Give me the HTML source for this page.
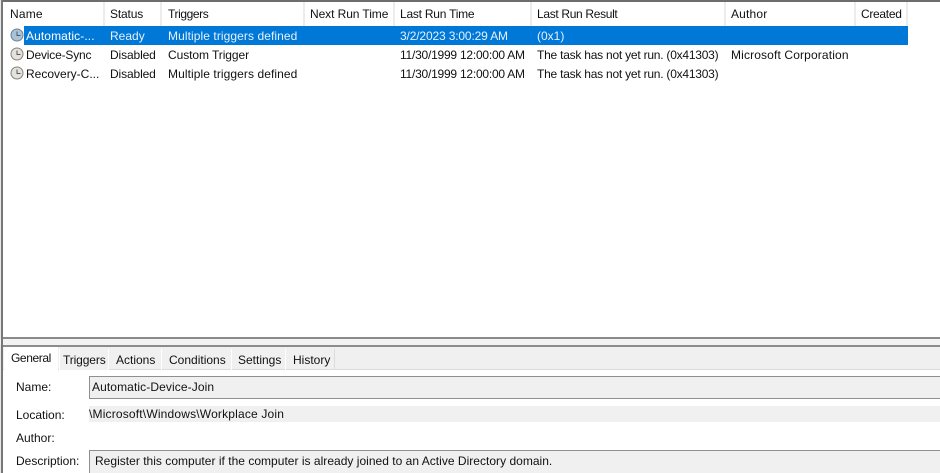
<!DOCTYPE html>
<html><head><meta charset="utf-8"><style>
html,body{margin:0;padding:0;width:940px;height:473px;overflow:hidden;background:#fff}
body{position:relative;font:12px "Liberation Sans",sans-serif;color:#111}
div{position:absolute;box-sizing:border-box}
.t{white-space:nowrap;line-height:16px;height:16px}
.s{width:2px;background:#ececec;top:2px;height:24px}
.i{width:14px;height:14px}
.a{letter-spacing:-.23px}
.m{letter-spacing:.08px}
</style></head><body>
<div style="left:0;top:0;width:940px;height:2px;background:#6d6d6d"></div>
<div style="left:0;top:0;width:1px;height:473px;background:#e8e8e8"></div>
<div style="left:1px;top:0;width:2px;height:473px;background:#777"></div>

<div class="s" style="left:103px"></div><div class="s" style="left:160px"></div><div class="s" style="left:303px"></div><div class="s" style="left:393px"></div><div class="s" style="left:530px"></div><div class="s" style="left:724px"></div><div class="s" style="left:854px"></div><div class="s" style="left:906px"></div>
<div class="t" style="left:10px;top:6px;letter-spacing:.2px">Name</div>
<div class="t" style="left:110px;top:6px;letter-spacing:-.15px">Status</div>
<div class="t" style="left:168px;top:6px;letter-spacing:-.4px">Triggers</div>
<div class="t" style="left:310px;top:6px;letter-spacing:-.08px">Next Run Time</div>
<div class="t" style="left:400px;top:6px;letter-spacing:-.23px">Last Run Time</div>
<div class="t" style="left:537px;top:6px;letter-spacing:-.33px">Last Run Result</div>
<div class="t" style="left:731px;top:6px;letter-spacing:.17px">Author</div>
<div class="t" style="left:861px;top:6px;letter-spacing:-.3px">Created</div>

<div style="left:24px;top:26px;width:884px;height:19px;background:#0078d7"></div>
<svg class="i" style="position:absolute;left:10px;top:28px" viewBox="0 0 14 14"><circle cx="7" cy="7" r="6" fill="#a9c3da" stroke="#6f7f8c"/><path d="M7 3.5V7.5H10.5" fill="none" stroke="#4f5b66"/></svg>
<svg class="i" style="position:absolute;left:10px;top:47px" viewBox="0 0 14 14"><circle cx="7" cy="7" r="6" fill="#e4e2dc" stroke="#85827a"/><path d="M7 3.5V7.5H10.5" fill="none" stroke="#5c5a55"/></svg>
<svg class="i" style="position:absolute;left:10px;top:66px" viewBox="0 0 14 14"><circle cx="7" cy="7" r="6" fill="#e4e2dc" stroke="#85827a"/><path d="M7 3.5V7.5H10.5" fill="none" stroke="#5c5a55"/></svg>

<div class="t" style="left:26px;top:28px;color:#fff;letter-spacing:.1px">Automatic-...</div>
<div class="t" style="left:110px;top:28px;color:#e6f1fb">Ready</div>
<div class="t m" style="left:168px;top:28px;color:#e6f1fb">Multiple triggers defined</div>
<div class="t" style="left:400px;top:28px;color:#e6f1fb;letter-spacing:-.15px">3/2/2023 3:00:29 AM</div>
<div class="t" style="left:537px;top:28px;color:#e6f1fb">(0x1)</div>

<div class="t" style="left:26px;top:47px;letter-spacing:-.18px">Device-Sync</div>
<div class="t" style="left:110px;top:47px;letter-spacing:-.12px">Disabled</div>
<div class="t" style="left:168px;top:47px;letter-spacing:-.07px">Custom Trigger</div>
<div class="t a" style="left:400px;top:47px">11/30/1999 12:00:00 AM</div>
<div class="t a" style="left:537px;top:47px">The task has not yet run. (0x41303)</div>
<div class="t" style="left:731px;top:47px;letter-spacing:.14px">Microsoft Corporation</div>

<div class="t" style="left:26px;top:66px">Recovery-C...</div>
<div class="t" style="left:110px;top:66px;letter-spacing:-.12px">Disabled</div>
<div class="t m" style="left:168px;top:66px">Multiple triggers defined</div>
<div class="t a" style="left:400px;top:66px">11/30/1999 12:00:00 AM</div>
<div class="t a" style="left:537px;top:66px">The task has not yet run. (0x41303)</div>

<div style="left:3px;top:337px;width:937px;height:2px;background:#8a8a8a"></div>
<div style="left:0;top:339px;width:940px;height:6px;background:#f3f3f3"></div>
<div style="left:1px;top:339px;width:2px;height:134px;background:#777"></div>
<div style="left:3px;top:345px;width:937px;height:2px;background:#8c8c8c"></div>
<div style="left:3px;top:347px;width:937px;height:23px;background:#f0f0f0;border-bottom:1px solid #dcdcdc"></div>
<div style="left:3px;top:370px;width:937px;height:103px;background:#fff"></div>

<div style="left:4px;top:347px;width:54px;height:24px;background:#fff"></div>
<div style="left:59px;top:349px;width:50px;height:21px;background:#f0f0f0;border-left:1px solid #fff;border-right:1px solid #fff"></div>
<div style="left:110px;top:349px;width:52px;height:21px;border-right:1px solid #fff"></div>
<div style="left:162px;top:349px;width:70px;height:21px;border-right:1px solid #fff"></div>
<div style="left:232px;top:349px;width:54px;height:21px;border-right:1px solid #fff"></div>
<div style="left:286px;top:349px;width:49px;height:21px;border-right:1px solid #dcdcdc"></div>
<div class="t" style="left:11px;top:350px;letter-spacing:-.4px">General</div>
<div class="t" style="left:63px;top:352px;letter-spacing:-.12px">Triggers</div>
<div class="t" style="left:116px;top:352px">Actions</div>
<div class="t" style="left:169px;top:352px">Conditions</div>
<div class="t" style="left:238px;top:352px">Settings</div>
<div class="t" style="left:293px;top:352px">History</div>

<div class="t" style="left:16px;top:379px">Name:</div>
<div style="left:89px;top:376px;width:851px;height:23px;background:#f0f0f0;border:solid #8f8f8f;border-width:1px 0 1px 1px"></div>
<div class="t" style="left:92px;top:379px;letter-spacing:.1px">Automatic-Device-Join</div>

<div class="t" style="left:16px;top:407px">Location:</div>
<div style="left:89px;top:406px;width:851px;height:16px;background:#f0f0f0"></div>
<div class="t" style="left:89px;top:406px;letter-spacing:.18px">\Microsoft\Windows\Workplace Join</div>

<div class="t" style="left:16px;top:430px">Author:</div>

<div class="t" style="left:16px;top:453px">Description:</div>
<div style="left:89px;top:450px;width:851px;height:23px;background:#f0f0f0;border:solid #8f8f8f;border-width:1px 0 0 1px"></div>
<div class="t" style="left:95px;top:453px;letter-spacing:.02px">Register this computer if the computer is already joined to an Active Directory domain.</div>
</body></html>
